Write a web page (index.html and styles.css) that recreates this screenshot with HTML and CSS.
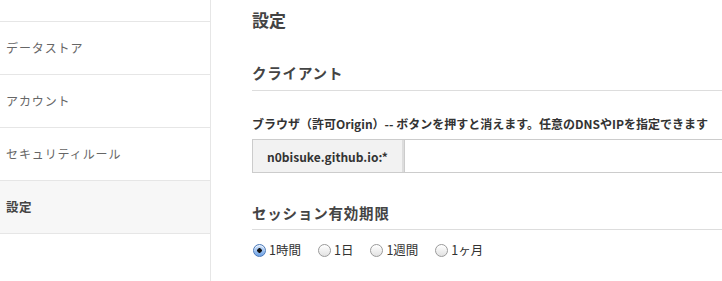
FILE: index.html
```html
<!DOCTYPE html>
<html lang="ja">
<head>
<meta charset="utf-8">
<link rel="stylesheet" href="styles.css">
</head>
<body>
<div class="layout">
  <nav class="sidebar">
    <ul class="menu">
      <li class="menu-item">データストア</li>
      <li class="menu-item">アカウント</li>
      <li class="menu-item">セキュリティルール</li>
      <li class="menu-item active">設定</li>
    </ul>
  </nav>
  <main class="main">
    <h1 class="page-title">設定</h1>
    <h2 class="section-title">クライアント</h2>
    <p class="field-label">ブラウザ（許可Origin）-- ボタンを押すと消えます。任意のDNSやIPを指定できます</p>
    <div class="input-group">
      <span class="addon">n0bisuke.github.io:*</span>
      <input class="text-input" type="text">
    </div>
    <h2 class="section-title second">セッション有効期限</h2>
    <div class="radios">
      <label class="radio"><input type="radio" name="exp" checked><span>1時間</span></label>
      <label class="radio"><input type="radio" name="exp"><span>1日</span></label>
      <label class="radio"><input type="radio" name="exp"><span>1週間</span></label>
      <label class="radio"><input type="radio" name="exp"><span>1ヶ月</span></label>
    </div>
  </main>
</div>
</body>
</html>
```
FILE: styles.css
```css
* { box-sizing: border-box; }
html, body {
  margin: 0;
  padding: 0;
  background: #fff;
  font-family: "Noto Sans CJK JP", "Noto Sans", sans-serif;
  color: #333;
  overflow: hidden;
}
.layout {
  display: flex;
  height: 281px;
}
.sidebar {
  width: 211px;
  flex: none;
  border-right: 1px solid #e6e6e6;
  padding-top: 21px;
}
.menu {
  list-style: none;
  margin: 0;
  padding: 0;
  border-top: 1px solid #e6e6e6;
}
.menu-item {
  height: 53px;
  border-bottom: 1px solid #e6e6e6;
  display: flex;
  align-items: center;
  padding-left: 6px;
  padding-bottom: 2px;
  font-size: 12px;
  color: #666;
  letter-spacing: 0.9px;
}
.menu-item.active {
  background: #f7f7f7;
  color: #444;
  font-weight: bold;
  font-size: 12.5px;
  letter-spacing: 0.5px;
}
.main {
  flex: 1;
  padding-left: 41px;
  min-width: 0;
}
.page-title {
  margin: 0;
  font-size: 17px;
  line-height: 40px;
  font-weight: bold;
  color: #444;
}
.section-title {
  margin: 21px 0 0;
  font-size: 14.5px;
  line-height: 24px;
  padding-bottom: 5px;
  border-bottom: 1px solid #ddd;
  font-weight: bold;
  color: #444;
  letter-spacing: 0.8px;
}
.section-title.second {
  margin-top: 28px;
  padding-bottom: 4px;
}
.field-label {
  margin: 24px 0 0;
  font-size: 12px;
  line-height: 18px;
  font-weight: bold;
  color: #333;
}
.input-group {
  margin-top: 6px;
  display: flex;
  height: 34px;
  border: 1px solid #ccc;
  border-right: none;
}
.addon {
  width: 151px;
  flex: none;
  background: #f2f2f2;
  border-right: 2px solid #ddd;
  display: flex;
  align-items: center;
  justify-content: center;
  font-size: 12px;
  font-weight: 600;
  color: #333;
}
.text-input {
  flex: 1;
  border: none;
  border-left: 1px solid #ccc;
  margin: 0;
  padding: 0 8px;
  outline: none;
  background: #fff;
}
.radios {
  margin-top: 11px;
  display: flex;
  gap: 17px;
  padding-left: 1px;
}
.radio {
  display: flex;
  align-items: center;
  gap: 3px;
  font-size: 12.5px;
  line-height: 18px;
  color: #333;
}
.radio input {
  -webkit-appearance: none;
  appearance: none;
  margin: 0;
  width: 13px;
  height: 13px;
  border-radius: 50%;
  border: 1px solid #9a9a9a;
  background: linear-gradient(#ffffff, #e2e2e2);
  box-shadow: inset 0 1px 1px rgba(255,255,255,0.8);
  position: relative;
}
.radio input:checked {
  border-color: #4a78b8;
  background: radial-gradient(circle, #111 0 2px, transparent 2.5px), linear-gradient(#cfe2fb, #6fa3e6);
}
```
